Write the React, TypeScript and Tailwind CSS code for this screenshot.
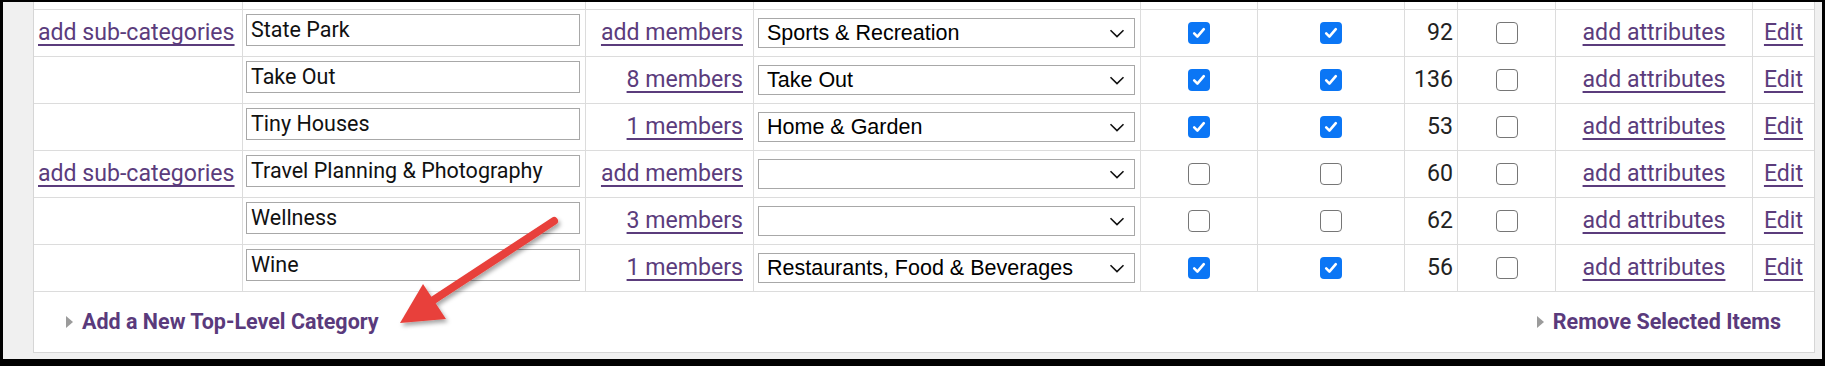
import React from "react";

const COLS =
  "grid grid-cols-[208px_343px_168px_387px_117px_147px_53px_98px_197px_62px]";

type Row = {
  sub: boolean;
  name: string;
  members: string;
  cat: string;
  c1: boolean;
  c2: boolean;
  num: string;
};

const rows: Row[] = [
  { sub: true, name: "State Park", members: "add members", cat: "Sports & Recreation", c1: true, c2: true, num: "92" },
  { sub: false, name: "Take Out", members: "8 members", cat: "Take Out", c1: true, c2: true, num: "136" },
  { sub: false, name: "Tiny Houses", members: "1 members", cat: "Home & Garden", c1: true, c2: true, num: "53" },
  { sub: true, name: "Travel Planning & Photography", members: "add members", cat: "", c1: false, c2: false, num: "60" },
  { sub: false, name: "Wellness", members: "3 members", cat: "", c1: false, c2: false, num: "62" },
  { sub: false, name: "Wine", members: "1 members", cat: "Restaurants, Food & Beverages", c1: true, c2: true, num: "56" },
];

function Link({ children }: { children: React.ReactNode }) {
  return (
    <a className="text-[23.1px] leading-none text-[#5b3c7c] underline decoration-[1.5px] underline-offset-[4px] whitespace-nowrap cursor-pointer">
      {children}
    </a>
  );
}

function Check({ on }: { on: boolean }) {
  if (on)
    return (
      <div className="w-[22px] h-[22px] rounded-[4px] bg-[#0b76f5] flex items-center justify-center">
        <svg width="14" height="12" viewBox="0 0 14 12">
          <path d="M2.2 6.4 L5.4 9.6 L11.8 2.2" fill="none" stroke="#fff" strokeWidth="2.6" strokeLinecap="round" strokeLinejoin="round" />
        </svg>
      </div>
    );
  return <div className="w-[22px] h-[22px] rounded-[4px] bg-white border-[1.5px] border-[#767676]" />;
}

function Cell({ className = "", children }: { className?: string; children?: React.ReactNode }) {
  return <div className={`border-l border-[#dcdcdc] ${className}`}>{children}</div>;
}

function Tri() {
  return (
    <svg width="7" height="12" viewBox="0 0 7 12" className="shrink-0">
      <polygon points="0,0 7,6 0,12" fill="#9b9b9b" />
    </svg>
  );
}

export default function App() {
  return (
    <div
      className="relative w-[1825px] h-[366px] bg-black pt-[2px] pl-[3px] pr-[3px] pb-[7px] overflow-hidden"
      style={{ fontFamily: "Roboto, 'Liberation Sans', sans-serif" }}
    >
      <div className="w-full h-full bg-[#f0f0f0] pl-[30px] pr-[7px] pb-[6px]">
        <div className="h-full bg-white border-l border-r border-b border-[#d6d6d6] flex flex-col">
          {/* partially visible previous row */}
          <div className={`${COLS} h-[8px] border-b border-[#dcdcdc] shrink-0`}>
            <div />
            {Array.from({ length: 9 }).map((_, i) => (
              <Cell key={i} />
            ))}
          </div>
          {rows.map((r, i) => (
            <div key={i} className={`${COLS} h-[47px] border-b border-[#dcdcdc] shrink-0`}>
              <div className="flex items-center pl-[4px]">{r.sub && <Link>add sub-categories</Link>}</div>
              <Cell>
                <div className="ml-[3px] mt-[4px] w-[334px] h-[32px] border border-[#a8a8a8] flex items-center px-[4px] text-[21.5px] text-[#111] whitespace-nowrap overflow-hidden">
                  {r.name}
                </div>
              </Cell>
              <Cell className="flex items-center justify-end pr-[10px]">
                <Link>{r.members}</Link>
              </Cell>
              <Cell>
                <div
                  className="ml-[4px] mt-[8px] w-[377px] h-[30px] border border-[#a8a8a8] flex items-center justify-between pl-[8px] pr-[9px] text-[21.5px] text-black whitespace-nowrap"
                  style={{ fontFamily: "'Liberation Sans', Arial, sans-serif" }}
                >
                  <span>{r.cat}</span>
                  <svg width="16" height="9" viewBox="0 0 16 9">
                    <path d="M1.5 1.2 L8 7.6 L14.5 1.2" fill="none" stroke="#111" strokeWidth="1.6" />
                  </svg>
                </div>
              </Cell>
              <Cell className="flex items-center justify-center">
                <Check on={r.c1} />
              </Cell>
              <Cell className="flex items-center justify-center">
                <Check on={r.c2} />
              </Cell>
              <Cell className="flex items-center justify-end pr-[4px] text-[23.1px] text-[#222]">{r.num}</Cell>
              <Cell className="flex items-center justify-center">
                <Check on={false} />
              </Cell>
              <Cell className="flex items-center justify-center">
                <Link>add attributes</Link>
              </Cell>
              <Cell className="flex items-center justify-center">
                <Link>Edit</Link>
              </Cell>
            </div>
          ))}
          <div className="flex-1 flex items-center justify-between pl-[32px] pr-[33px]">
            <div className="flex items-center gap-[9px]">
              <Tri />
              <span className="text-[21.5px] font-bold text-[#5a3a7c]">Add a New Top-Level Category</span>
            </div>
            <div className="flex items-center gap-[9px]">
              <Tri />
              <span className="text-[21.5px] font-bold text-[#5a3a7c]">Remove Selected Items</span>
            </div>
          </div>
        </div>
      </div>

      {/* annotation arrow */}
      <svg className="absolute inset-0 pointer-events-none" width="1825" height="366" viewBox="0 0 1825 366">
        <defs>
          <filter id="sh" x="-20%" y="-20%" width="140%" height="140%">
            <feDropShadow dx="2" dy="3" stdDeviation="2.2" floodColor="#000" floodOpacity="0.35" />
          </filter>
        </defs>
        <g filter="url(#sh)">
          <line x1="554" y1="221" x2="432" y2="301" stroke="#e8403a" strokeWidth="8" strokeLinecap="round" />
          <polygon points="400,323 423,284 446,319" fill="#e8403a" />
        </g>
      </svg>
    </div>
  );
}
